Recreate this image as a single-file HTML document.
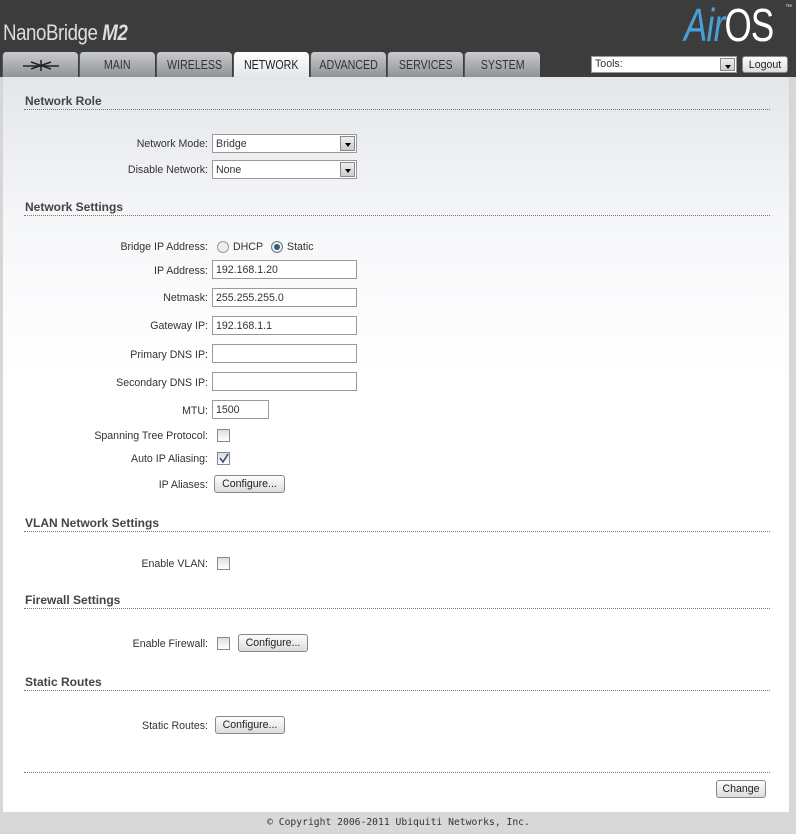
<!DOCTYPE html>
<html><head><style>
*{margin:0;padding:0;box-sizing:border-box}
body{width:796px;height:832px;position:relative;background:#d6d6d6;font-family:"Liberation Sans",sans-serif;font-size:11px;color:#333;overflow:hidden}
.hdr{position:absolute;left:0;top:0;width:796px;height:77px;background:#3c3c3c}
.tab{position:absolute;top:52px;height:25px;width:76px;background:linear-gradient(#c9cbce,#8f9296);border-radius:4px 4px 0 0;color:#333;text-align:center;line-height:26px;border-left:1px solid #555}
.tab span{display:inline-block;font-size:13px;transform:scaleX(0.82)}
.tab.on{background:linear-gradient(#fff,#e4e6ea);color:#222}
.panel{position:absolute;left:3px;top:77px;width:786px;height:735px;background:linear-gradient(#e3e6ea 0,#f6f7f9 150px,#fff 300px)}
.foot{position:absolute;left:0;top:812px;width:796px;height:20px;background:#d8d8d8;text-align:center;font-family:"DejaVu Sans Mono","Liberation Mono",monospace;font-size:10px;line-height:22px;color:#333}
.foot span{display:inline-block;transform:scaleX(0.97)}
.sec{position:absolute;left:25px;font-weight:bold;font-size:12px;color:#444}
.ln{position:absolute;left:24px;width:746px;border-top:1px dotted #777}
.lb{position:absolute;right:588px;text-align:right;white-space:nowrap;font-size:10.6px;color:#333;margin-top:1px}
.in{position:absolute;left:212px;width:145px;height:19px;border:1px solid #999;background:#fff;padding-left:3px;line-height:18px;font-size:10.6px}
.sel .ar{position:absolute;right:1px;top:1px;width:15px;height:15px;background:linear-gradient(#eee,#ccc);border:1px solid #888}
.sel .ar:after{content:"";position:absolute;left:4px;top:6px;border:3px solid transparent;border-top:4px solid #000}
.cb{position:absolute;left:217px;width:13px;height:13px;border:1px solid #888;background:linear-gradient(#ddd,#fff)}
.btn{position:absolute;height:18px;border:1px solid #888;border-radius:3px;background:linear-gradient(#fdfdfd,#dcdcdc);font-size:10.6px;line-height:16px;text-align:center;color:#222}
</style></head><body>
<div class="hdr"></div>
<div style="position:absolute;left:3px;top:20px;color:#ddd;font-size:22px;letter-spacing:-0.5px;transform:scaleX(0.85);transform-origin:left">NanoBridge <i style="font-weight:bold">M2</i></div>
<div style="position:absolute;left:684px;top:-2px;font-size:46px;color:#fff;letter-spacing:-1px;transform:scaleX(0.76);transform-origin:left"><i style="color:#4a9fd8">Air</i>OS</div>
<div style="position:absolute;left:785px;top:4px;color:#ddd;font-size:7px">™</div>
<div class="tab" style="left:2px"><svg width="76" height="25"><path d="M20 14 L56 14 M38 8 L38 19 M28 10 L48 17 M48 10 L28 17" stroke="#222" stroke-width="1.5"/></svg></div>
<div class="tab" style="left:79px"><span>MAIN</span></div>
<div class="tab" style="left:156px"><span>WIRELESS</span></div>
<div class="tab on" style="left:233px"><span>NETWORK</span></div>
<div class="tab" style="left:310px"><span>ADVANCED</span></div>
<div class="tab" style="left:387px"><span>SERVICES</span></div>
<div class="tab" style="left:464px"><span>SYSTEM</span></div>
<div class="in sel" style="left:591px;top:56px;width:146px;height:17px;line-height:15px">Tools:<div class="ar" style="height:13px;top:1px"></div></div>
<div class="btn" style="left:742px;top:56px;width:46px;height:17px">Logout</div>
<div class="panel"></div>

<div class="sec" style="top:94px">Network Role</div><div class="ln" style="top:109px"></div>
<div class="lb" style="top:137px">Network Mode:</div><div class="in sel" style="top:134px">Bridge<div class="ar"></div></div>
<div class="lb" style="top:163px">Disable Network:</div><div class="in sel" style="top:160px">None<div class="ar"></div></div>

<div class="sec" style="top:200px">Network Settings</div><div class="ln" style="top:215px"></div>
<div class="lb" style="top:240px">Bridge IP Address:</div>
<div style="position:absolute;left:217px;top:241px;width:12px;height:12px;border-radius:50%;border:1px solid #999;background:#eee"></div>
<div style="position:absolute;left:233px;top:241px;font-size:10.6px">DHCP</div>
<div style="position:absolute;left:271px;top:241px;width:12px;height:12px;border-radius:50%;border:1px solid #777;background:#eee"><div style="margin:2px;width:6px;height:6px;border-radius:50%;background:#2b5f86"></div></div>
<div style="position:absolute;left:287px;top:241px;font-size:10.6px">Static</div>
<div class="lb" style="top:264px">IP Address:</div><div class="in" style="top:260px">192.168.1.20</div>
<div class="lb" style="top:291px">Netmask:</div><div class="in" style="top:288px">255.255.255.0</div>
<div class="lb" style="top:319px">Gateway IP:</div><div class="in" style="top:316px">192.168.1.1</div>
<div class="lb" style="top:348px">Primary DNS IP:</div><div class="in" style="top:344px"></div>
<div class="lb" style="top:376px">Secondary DNS IP:</div><div class="in" style="top:372px"></div>
<div class="lb" style="top:404px">MTU:</div><div class="in" style="top:400px;width:57px">1500</div>
<div class="lb" style="top:429px">Spanning Tree Protocol:</div><div class="cb" style="top:429px"></div>
<div class="lb" style="top:452px">Auto IP Aliasing:</div><div class="cb" style="top:452px"><svg width="11" height="11" style="position:absolute;left:0;top:0"><path d="M2 5 L5 9 L10 1" stroke="#2b4f7a" stroke-width="1.6" fill="none"/></svg></div>
<div class="lb" style="top:478px">IP Aliases:</div><div class="btn" style="left:214px;top:475px;width:71px">Configure...</div>

<div class="sec" style="top:516px">VLAN Network Settings</div><div class="ln" style="top:531px"></div>
<div class="lb" style="top:557px">Enable VLAN:</div><div class="cb" style="top:557px"></div>

<div class="sec" style="top:593px">Firewall Settings</div><div class="ln" style="top:608px"></div>
<div class="lb" style="top:637px">Enable Firewall:</div><div class="cb" style="top:637px"></div>
<div class="btn" style="left:238px;top:634px;width:70px">Configure...</div>

<div class="sec" style="top:675px">Static Routes</div><div class="ln" style="top:690px"></div>
<div class="lb" style="top:719px">Static Routes:</div><div class="btn" style="left:215px;top:716px;width:70px">Configure...</div>

<div class="ln" style="top:772px"></div>
<div class="btn" style="left:716px;top:780px;width:50px">Change</div>
<div class="foot"><span>© Copyright 2006-2011 Ubiquiti Networks, Inc.</span></div>
</body></html>
